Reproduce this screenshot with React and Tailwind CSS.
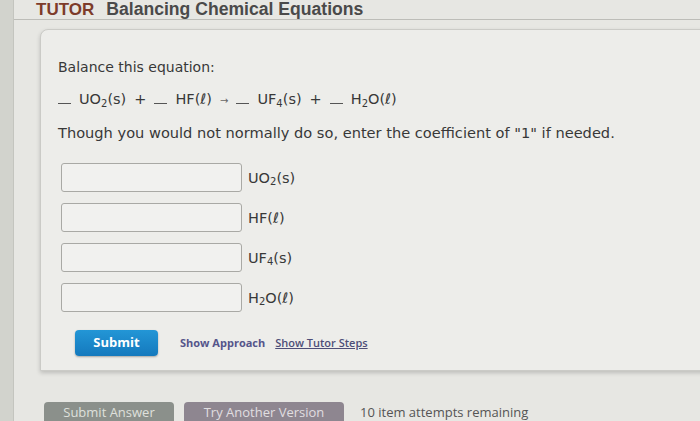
import React from 'react';

const Blank = () => (
  <span className="inline-block w-[13px] border-b border-[#555] mr-[8px] align-baseline"></span>
);

const Species = ({ children }) => <span className="whitespace-nowrap">{children}</span>;

const rows = [
  { id: 'uo2', label: <>UO<sub className="text-[10px]">2</sub>(s)</> },
  { id: 'hf', label: <>HF(ℓ)</> },
  { id: 'uf4', label: <>UF<sub className="text-[10px]">4</sub>(s)</> },
  { id: 'h2o', label: <>H<sub className="text-[10px]">2</sub>O(ℓ)</> },
];

export default function App() {
  return (
    <div className="w-[700px] h-[421px] overflow-hidden bg-[#e7e7e3] flex text-[#383838]" style={{ fontFamily: '"DejaVu Sans", Verdana, sans-serif' }}>
      {/* left strip of the window */}
      <div className="w-[14px] shrink-0 bg-[#d2d3cd] border-r border-[#c4c5bf]"></div>

      <div className="flex-1 min-w-0 flex flex-col">
        {/* heading */}
        <div className="h-[20px] shrink-0 flex items-end pl-[22px] border-b border-[#bdbdb8]" style={{ fontFamily: '"Liberation Sans", Arial, sans-serif' }}>
          <h1 className="leading-[19px] font-bold whitespace-nowrap">
            <span className="text-[17px] text-[#7d3b2a]">TUTOR</span>
            <span className="text-[17.6px] text-[#4a4a4a] ml-[12px]">Balancing Chemical Equations</span>
          </h1>
        </div>

        {/* question card */}
        <div className="ml-[26px] mt-[9px] w-[700px] h-[342px] shrink-0 bg-[#ededea] border border-[#cbcbc7] rounded-tl-[8px] shadow-[0_2px_4px_rgba(0,0,0,0.18)] pl-[17px] pt-[27px]">
          <p className="text-[14px] leading-[20px]">Balance this equation:</p>

          <p className="mt-[12px] text-[14.5px] leading-[20px] flex items-baseline">
            <Blank />
            <Species>UO<sub className="text-[10px]">2</sub>(s)</Species>
            <span className="mx-[8px]">+</span>
            <Blank />
            <Species>HF(ℓ)</Species>
            <span className="mx-[8px] text-[10px] text-[#666]">→</span>
            <Blank />
            <Species>UF<sub className="text-[10px]">4</sub>(s)</Species>
            <span className="mx-[8px]">+</span>
            <Blank />
            <Species>H<sub className="text-[10px]">2</sub>O(ℓ)</Species>
          </p>

          <p className="mt-[12px] text-[14.6px] leading-[20px] whitespace-nowrap">
            Though you would not normally do so, enter the coefficient of "1" if needed.
          </p>

          <div className="mt-[20px] ml-[3px] flex flex-col gap-[11px]">
            {rows.map(r => (
              <div key={r.id} className="flex items-center gap-[6px]">
                <input
                  type="text"
                  className="w-[181px] h-[29px] bg-[#f1f1ef] border border-[#a9a9a5] rounded-[3px] outline-none"
                />
                <span className="text-[14.5px] leading-[20px]">{r.label}</span>
              </div>
            ))}
          </div>

          <div className="mt-[18px] ml-[17px] flex items-center" style={{ fontFamily: '"Open Sans", sans-serif' }}>
            <button className="w-[83px] h-[26px] rounded-[4px] bg-gradient-to-b from-[#2396d6] to-[#1479bd] text-white text-[13px] font-bold shadow-[0_1px_2px_rgba(0,0,0,0.3)]">
              Submit
            </button>
            <a className="ml-[22px] text-[11px] font-bold text-[#55558a]">Show Approach</a>
            <a className="ml-[10px] text-[11px] font-semibold text-[#4e4e78] underline">Show Tutor Steps</a>
          </div>
        </div>

        {/* bottom actions, partly below the window edge */}
        <div className="mt-[31px] ml-[30px] flex items-start" style={{ fontFamily: '"Open Sans", sans-serif' }}>
          <button className="w-[130px] h-[30px] rounded-t-[4px] bg-[#8b908b] text-[#dfe0dc] text-[13px] leading-[16px] pt-[2px] flex justify-center items-start">
            Submit Answer
          </button>
          <button className="ml-[10px] w-[160px] h-[30px] rounded-t-[4px] bg-[#8e8690] text-[#e0dee0] text-[13px] leading-[16px] pt-[2px] flex justify-center items-start">
            Try Another Version
          </button>
          <span className="ml-[16px] pt-[2px] text-[13px] leading-[16px] text-[#555]">10 item attempts remaining</span>
        </div>
      </div>
    </div>
  );
}
